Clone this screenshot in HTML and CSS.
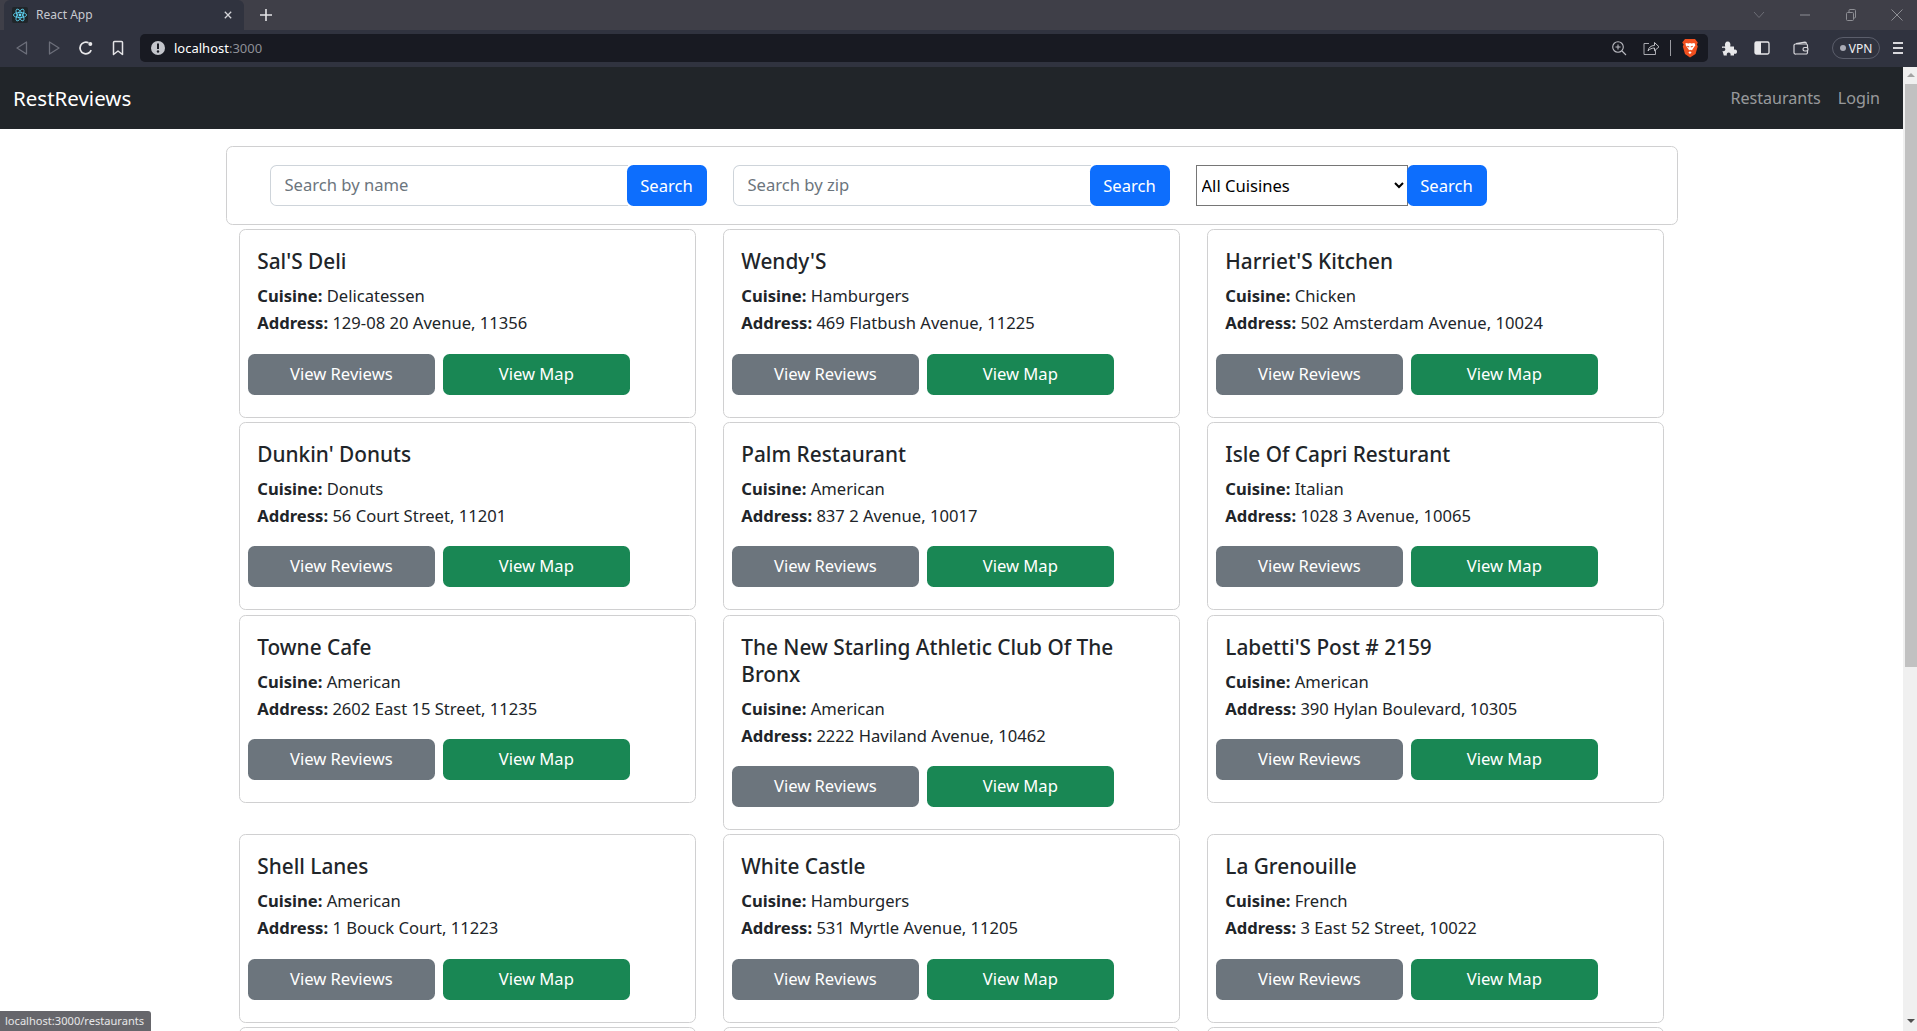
FILE: index.html
```html
<!DOCTYPE html>
<html lang="en">
<head>
<meta charset="utf-8">
<title>React App</title>
<link rel="stylesheet" href="styles.css">
</head>
<body>
<div class="tabstrip">
  <div class="tab">
    <svg class="favicon" viewBox="0 0 16 16"><rect width="16" height="16" rx="2" fill="#20262a"/><g fill="none" stroke="#61dafb" stroke-width=".8"><ellipse cx="8" cy="8" rx="6.6" ry="2.6"/><ellipse cx="8" cy="8" rx="6.6" ry="2.6" transform="rotate(60 8 8)"/><ellipse cx="8" cy="8" rx="6.6" ry="2.6" transform="rotate(120 8 8)"/></g><circle cx="8" cy="8" r="1.4" fill="#61dafb"/></svg>
    <span class="tab-title">React App</span>
    <svg class="tab-close" viewBox="0 0 10 10"><path d="M1 1l8 8M9 1l-8 8" stroke="#d5d6da" stroke-width="1.6" fill="none"/></svg>
  </div>
  <svg class="new-tab" viewBox="0 0 12 12"><path d="M6 0v12M0 6h12" stroke="#e4e4e6" stroke-width="1.6" fill="none"/></svg>
  <div class="win-controls">
    <svg class="win-btn" viewBox="0 0 16 16"><path d="M3 5l5 5.500 5-5.500" stroke="#6c6d75" fill="none"/></svg>
    <svg class="win-btn" viewBox="0 0 16 16"><path d="M3 8h10" stroke="#8d8e94" fill="none"/></svg>
    <svg class="win-btn" viewBox="0 0 16 16"><path d="M3.500 6.500a1 1 0 0 1 1-1h5a1 1 0 0 1 1 1v6a1 1 0 0 1-1 1h-5a1 1 0 0 1-1-1zM6 5.500v-2a1 1 0 0 1 1-1h4.500a1 1 0 0 1 1 1v6.500a1 1 0 0 1-1 1h-1" stroke="#8d8e94" fill="none"/></svg>
    <svg class="win-btn" viewBox="0 0 16 16"><path d="M2.500 2.500l11 11M13.500 2.500l-11 11" stroke="#8d8e94" fill="none"/></svg>
  </div>
</div>
<div class="toolbar">
  <span class="tool"><svg class="ico" viewBox="0 0 16 16"><path d="M12.500 2v12L3 8z" stroke="#6c6f7a" stroke-width="1.300" fill="none" stroke-linejoin="round"/></svg></span>
  <span class="tool"><svg class="ico" viewBox="0 0 16 16"><path d="M3.500 2v12L13 8z" stroke="#6c6f7a" stroke-width="1.300" fill="none" stroke-linejoin="round"/></svg></span>
  <span class="tool"><svg class="ico" viewBox="0 0 16 16"><path d="M13.200 10.200A5.800 5.800 0 1 1 10.500 2.800" stroke="#e8e8ea" stroke-width="1.700" fill="none"/><circle cx="12.300" cy="4" r="2" fill="#e8e8ea"/></svg></span>
  <span class="tool"><svg class="ico" viewBox="0 0 16 16"><path d="M3.500 2.500a1 1 0 0 1 1-1h7a1 1 0 0 1 1 1v12L8 11l-4.500 3.500z" stroke="#e4e4e6" stroke-width="1.500" fill="none" stroke-linejoin="round"/></svg></span>
  <div class="address">
    <svg class="ico" viewBox="0 0 16 16"><circle cx="8" cy="8" r="7" fill="#c3c5cb"/><path d="M8 3.500v5.500" stroke="#1a1c24" stroke-width="2" fill="none"/><circle cx="8" cy="11.500" r="1.200" fill="#1a1c24"/></svg>
    <span class="url">localhost<span class="url-port">:3000</span></span>
    <svg class="ico addr-zoom" viewBox="0 0 16 16"><circle cx="7" cy="7" r="5.300" stroke="#b9bac0" stroke-width="1.100" fill="none"/><path d="M11 11l4 4M7 4.500v5M4.500 7h5" stroke="#b9bac0" stroke-width="1.100" fill="none"/></svg>
    <svg class="ico addr-share" viewBox="0 0 16 16"><path d="M6 3.500H1v11h11.500V10" stroke="#a8a9af" fill="none"/><path d="M5 11c.5-3.500 3-5.500 6.500-5.500V2.500L16 6.800l-4.500 4V8C9 8 6.500 9 5 11z" stroke="#c0c1c6" fill="none"/></svg>
    <span class="addr-sep"></span>
    <svg class="ico brave" viewBox="0 0 16 18"><path d="M3.500 1h9l2.500 3-.8 2 .8 1.500-2 7L8 17.500l-4.500-3-2-7L2.300 6 1 4z" fill="#f1501f"/><path d="M4 4.500l2.800.5L8 4.500l1.200.5 2.800-.5.800 2-2 3-1 1.500L8 10.500 7.200 11l-1-1.500-2-3zM6.500 13l1.500-1 1.500 1L8 14.500z" fill="#fff"/><path d="M5.500 7.500l1.800.6M10.500 7.500l-1.800.6" stroke="#f1501f" fill="none"/></svg>
  </div>
  <span class="tool ext"><svg class="ico" viewBox="0 0 16 16"><path d="M1 6.500h3.200c-.8-3 .3-5 2.500-5s3.300 2 2.500 5H13v3.200c2.200-.6 3 .6 3 2s-.8 2.600-3 2V15.500H9.500c.5-2-.5-3-1.800-3s-2.400 1-1.800 3H2.800L1.500 11c2 .5 2.800-.5 2.800-1.800S3 7.500 1 8z" fill="#e8e8ea"/></svg></span>
  <span class="tool"><svg class="ico" viewBox="0 0 16 16"><rect x="1" y="2" width="14" height="12" rx="1.500" stroke="#e8e8ea" stroke-width="1.300" fill="none"/><rect x="1" y="2" width="6" height="12" fill="#e8e8ea"/></svg></span>
  <span class="tool wallet"><svg class="ico" viewBox="0 0 16 16"><path d="M3 3.500L12 2.200a1.500 1.500 0 0 1 1.500 1.300M2.500 4h10.500a1.500 1.500 0 0 1 1.500 1.500v7A1.500 1.500 0 0 1 13 14H3A1.500 1.500 0 0 1 1 12.500V5.500A1.500 1.500 0 0 1 2.500 4z" stroke="#d8d8dc" stroke-width="1.200" fill="none"/><rect x="10" y="7.500" width="5" height="3.500" rx="1.700" stroke="#d8d8dc" stroke-width="1.200" fill="#30333f"/></svg></span>
  <span class="vpn"><span class="vpn-dot"></span>VPN</span>
  <span class="tool"><svg class="ico" viewBox="0 0 16 16"><path d="M3 3h10M3 8h10M3 13h10" stroke="#d8d8dc" stroke-width="2" fill="none"/></svg></span>
</div>
<div class="viewport">
  <div class="page">
    <nav class="navbar">
      <a class="brand">RestReviews</a>
      <div class="nav-links">
        <a class="nav-link">Restaurants</a>
        <a class="nav-link">Login</a>
      </div>
    </nav>
    <main class="container">
      <form class="search-card">
        <div class="search-group"><input class="search-input" type="text" placeholder="Search by name"><button class="btn btn-blue btn-search" type="button">Search</button></div>
        <div class="search-group"><input class="search-input" type="text" placeholder="Search by zip"><button class="btn btn-blue btn-search" type="button">Search</button></div>
        <div class="search-group group-cuisine"><select class="cuisine"><option>All Cuisines</option></select><button class="btn btn-blue btn-search" type="button">Search</button></div>
      </form>
      <section class="grid">
        <article class="card"><h5 class="card-title">Sal'S Deli</h5><p class="card-text"><strong>Cuisine: </strong>Delicatessen<br><strong>Address: </strong>129-08 20 Avenue, 11356</p><div class="actions"><a class="btn btn-gray">View Reviews</a><a class="btn btn-green">View Map</a></div></article>
        <article class="card"><h5 class="card-title">Wendy'S</h5><p class="card-text"><strong>Cuisine: </strong>Hamburgers<br><strong>Address: </strong>469 Flatbush Avenue, 11225</p><div class="actions"><a class="btn btn-gray">View Reviews</a><a class="btn btn-green">View Map</a></div></article>
        <article class="card"><h5 class="card-title">Harriet'S Kitchen</h5><p class="card-text"><strong>Cuisine: </strong>Chicken<br><strong>Address: </strong>502 Amsterdam Avenue, 10024</p><div class="actions"><a class="btn btn-gray">View Reviews</a><a class="btn btn-green">View Map</a></div></article>
        <article class="card"><h5 class="card-title">Dunkin' Donuts</h5><p class="card-text"><strong>Cuisine: </strong>Donuts<br><strong>Address: </strong>56 Court Street, 11201</p><div class="actions"><a class="btn btn-gray">View Reviews</a><a class="btn btn-green">View Map</a></div></article>
        <article class="card"><h5 class="card-title">Palm Restaurant</h5><p class="card-text"><strong>Cuisine: </strong>American<br><strong>Address: </strong>837 2 Avenue, 10017</p><div class="actions"><a class="btn btn-gray">View Reviews</a><a class="btn btn-green">View Map</a></div></article>
        <article class="card"><h5 class="card-title">Isle Of Capri Resturant</h5><p class="card-text"><strong>Cuisine: </strong>Italian<br><strong>Address: </strong>1028 3 Avenue, 10065</p><div class="actions"><a class="btn btn-gray">View Reviews</a><a class="btn btn-green">View Map</a></div></article>
        <article class="card"><h5 class="card-title">Towne Cafe</h5><p class="card-text"><strong>Cuisine: </strong>American<br><strong>Address: </strong>2602 East 15 Street, 11235</p><div class="actions"><a class="btn btn-gray">View Reviews</a><a class="btn btn-green">View Map</a></div></article>
        <article class="card"><h5 class="card-title">The New Starling Athletic Club Of The Bronx</h5><p class="card-text"><strong>Cuisine: </strong>American<br><strong>Address: </strong>2222 Haviland Avenue, 10462</p><div class="actions"><a class="btn btn-gray">View Reviews</a><a class="btn btn-green">View Map</a></div></article>
        <article class="card"><h5 class="card-title">Labetti'S Post # 2159</h5><p class="card-text"><strong>Cuisine: </strong>American<br><strong>Address: </strong>390 Hylan Boulevard, 10305</p><div class="actions"><a class="btn btn-gray">View Reviews</a><a class="btn btn-green">View Map</a></div></article>
        <article class="card"><h5 class="card-title">Shell Lanes</h5><p class="card-text"><strong>Cuisine: </strong>American<br><strong>Address: </strong>1 Bouck Court, 11223</p><div class="actions"><a class="btn btn-gray">View Reviews</a><a class="btn btn-green">View Map</a></div></article>
        <article class="card"><h5 class="card-title">White Castle</h5><p class="card-text"><strong>Cuisine: </strong>Hamburgers<br><strong>Address: </strong>531 Myrtle Avenue, 11205</p><div class="actions"><a class="btn btn-gray">View Reviews</a><a class="btn btn-green">View Map</a></div></article>
        <article class="card"><h5 class="card-title">La Grenouille</h5><p class="card-text"><strong>Cuisine: </strong>French<br><strong>Address: </strong>3 East 52 Street, 10022</p><div class="actions"><a class="btn btn-gray">View Reviews</a><a class="btn btn-green">View Map</a></div></article>
        <article class="card card-stub"></article>
        <article class="card card-stub"></article>
        <article class="card card-stub"></article>
      </section>
    </main>
  </div>
  <div class="scrollbar">
    <span class="arrow-up"></span>
    <span class="thumb"></span>
    <span class="arrow-down"></span>
  </div>
  <div class="status">localhost:3000/restaurants</div>
</div>
</body>
</html>
```
FILE: styles.css
```css
* { box-sizing: border-box; }
html, body { margin: 0; height: 100%; overflow: hidden; }
body {
  display: flex;
  flex-direction: column;
  height: 1031px;
  font-family: "Noto Sans", sans-serif;
  font-size: 16.6px;
  color: #212529;
  background: #fff;
}

/* browser frame */
.tabstrip { height: 30px; flex: none; display: flex; align-items: center; padding-left: 4px; background: #3f3f48; }
.tab { width: 240px; height: 30px; display: flex; align-items: center; padding: 0 8px 1px; background: #30333f; border-radius: 6px 6px 0 0; }
.favicon { width: 16px; height: 16px; flex: none; }
.tab-title { margin-left: 8px; flex: 1; font-size: 12px; color: #c8cad0; }
.tab-close { width: 8px; height: 8px; margin-right: 4px; }
.new-tab { width: 12px; height: 12px; margin-left: 16px; }
.win-controls { margin-left: auto; display: flex; padding-bottom: 1px; }
.win-btn { width: 16px; height: 16px; margin: 0 15px; }
.win-btn:last-child { margin-right: 12px; }
.toolbar { height: 37px; flex: none; display: flex; align-items: center; padding: 0 3px 1px 6px; background: #30333f; }
.tool { width: 32px; height: 32px; flex: none; display: flex; align-items: center; justify-content: center; }
.ico { width: 16px; height: 16px; flex: none; display: block; }
.address { flex: 1; height: 28px; margin: 0 5px 0 6px; display: flex; align-items: center; padding: 0 9px 0 10px; background: #181a22; border-radius: 5px; }
.url { margin-left: 8px; font-size: 13px; color: #fff; }
.url-port { color: #8d8f96; }
.addr-zoom { margin-left: auto; }
.addr-share { margin-left: 16px; }
.addr-sep { width: 1px; height: 16px; margin-left: 11px; background: #9a9ba1; }
.brave { width: 18px; height: 20px; margin-left: 10px; }
.ext { margin-right: 1px; }
.wallet { margin-left: 7px; }
.vpn { width: 48px; height: 22px; margin-left: 15px; margin-right: 2px; flex: none; display: flex; align-items: center; justify-content: center; gap: 3px; border: 1px solid #5b5e6b; border-radius: 11px; color: #f0f0f2; font-size: 12px; }
.vpn-dot { width: 6px; height: 6px; border-radius: 50%; background: #a9abb5; }

/* viewport */
.viewport { flex: 1; min-height: 0; display: flex; position: relative; }
.page { flex: 1; min-width: 0; overflow: hidden; }
.scrollbar { width: 14px; flex: none; display: flex; flex-direction: column; align-items: flex-end; background: #f0f0f0; }
.arrow-up { width: 12px; height: 17px; flex: none; display: flex; }
.arrow-up::before { content: ""; height: 0; margin: 6px 2px 0; border: 4px solid transparent; border-top: 0; border-bottom: 4px solid #a3a3a3; }
.thumb { width: 12px; height: 583px; flex: none; background: #c1c1c1; }
.arrow-down { width: 12px; margin-top: auto; height: 15px; flex: none; display: flex; }
.arrow-down::before { content: ""; margin: 3px 2px 0; height: 0; border: 4px solid transparent; border-bottom: 0; border-top: 4px solid #505050; }
.status { position: absolute; left: 0; bottom: 0; height: 20px; width: 151px; padding-left: 5px; background: #66666b; border-radius: 0 3px 0 0; color: #e6e6e8; font-size: 11.100px; line-height: 20px; white-space: nowrap; overflow: hidden; }

/* navbar */
.navbar { height: 62px; display: flex; align-items: center; justify-content: space-between; padding: 0 23px 0 13px; background: #212529; }
.brand { color: #fff; font-size: 20.500px; }
.nav-links { display: flex; gap: 17px; }
.nav-link { color: rgba(255, 255, 255, .55); font-size: 16.100px; }

/* content */
.container { width: 1452px; margin: 17px auto 0; }
.search-card { height: 79px; margin-bottom: 4.400px; padding: 17.600px 0 0 43px; display: flex; gap: 26px; border: 1.100px solid #d0d0d1; border-radius: 6.500px; }
.search-group { display: flex; width: 437px; height: 41px; flex: none; }
.group-cuisine { width: 291px; }
.search-input { flex: 1; min-width: 0; padding: 0 14px 1px; border: 1.100px solid #ced4da; border-right: 0; border-radius: 6.500px 0 0 6.500px; font: inherit; color: #212529; background: #fff; }
.search-input::placeholder { color: #6c757d; }
.cuisine { flex: 1; min-width: 0; padding: 0 1px; font: inherit; background-color: #fff; border: 1.100px solid #767676; border-radius: 0; color: #000; }
.grid { padding: 0 13.200px; display: grid; grid-template-columns: repeat(3, 1fr); column-gap: 26.400px; row-gap: 4.400px; align-items: start; }
.card { border: 1.100px solid #d0d0d1; border-radius: 6.500px; padding: 18px 0 22.100px 17.600px; }
.card-stub { height: 188px; }
.card-title { margin: 0 17.600px 6.800px 0; font-size: 20.800px; font-weight: 500; line-height: 27px; }
.card-text { margin: 0 0 17.400px; line-height: 27px; }
.actions { margin-left: -9.500px; display: flex; gap: 8px; }
.btn { display: flex; align-items: center; justify-content: center; height: 41px; padding-bottom: 2px; color: #fff; border: 0; border-radius: 6.500px; font: inherit; }
.btn-search { width: 80px; margin-left: -1px; padding-bottom: 1px; }
.btn-blue { background: #0d6efd; }
.btn-gray { width: 187px; background: #6c757d; }
.btn-green { width: 187px; background: #198754; }
```
